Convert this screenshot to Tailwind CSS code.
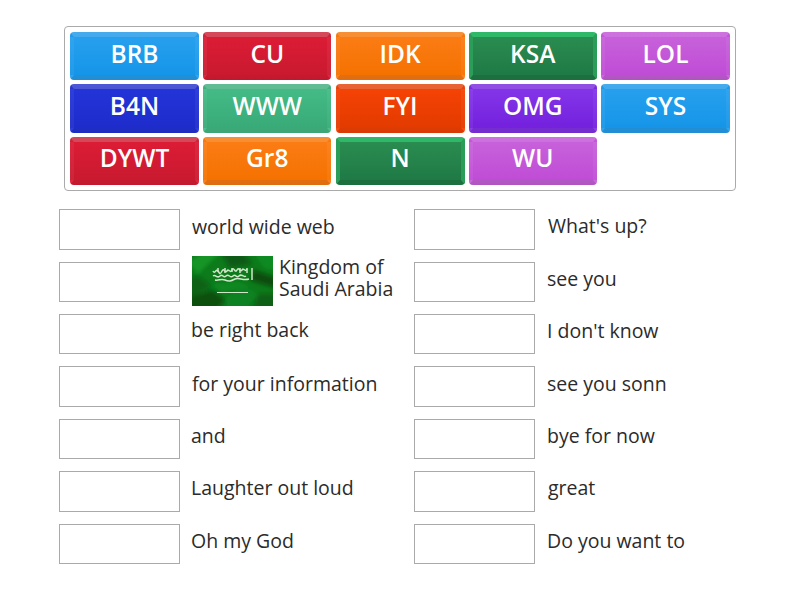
<!DOCTYPE html>
<html><head><meta charset="utf-8"><script src="https://cdn.jsdelivr.net/npm/@tailwindcss/browser@4"></script></head>
<body class="bg-white w-[800px] h-[600px] overflow-hidden font-['Open_Sans',sans-serif] text-[#2b2b2b]">
<div class="pt-[26px] pl-[64px]">
<div class="w-[672px] h-[165px] border border-[#aaaaaa] rounded-[4px] pt-[5px] pl-[5px]">
<div class="grid grid-cols-[129px_128px_129px_128px_129px] gap-x-[4.25px] grid-rows-[48px_49px_48px] gap-y-[4px] w-[660px] text-white font-semibold text-[24.5px] leading-[33px] text-center">
<div class="rounded-[4px] border-t-[5px] border-b-[5px] border-x-[4px] border-t-white/20 border-x-white/5 border-b-black/10 bg-gradient-to-b from-[#26a0ee] to-[#1595e8]">BRB</div>
<div class="rounded-[4px] border-t-[5px] border-b-[5px] border-x-[4px] border-t-white/20 border-x-white/5 border-b-black/10 bg-gradient-to-b from-[#dc1c35] to-[#c91a30]">CU</div>
<div class="rounded-[4px] border-t-[5px] border-b-[5px] border-x-[4px] border-t-white/20 border-x-white/5 border-b-black/10 bg-gradient-to-b from-[#fb7c14] to-[#f57200]">IDK</div>
<div class="rounded-[4px] border-t-[5px] border-b-[5px] border-x-[4px] border-t-[#2fb868] border-x-[#2a9e58] border-b-[#1c6f3f] bg-gradient-to-b from-[#2a8c50] to-[#1f7a45]">KSA</div>
<div class="rounded-[4px] border-t-[5px] border-b-[5px] border-x-[4px] border-t-white/20 border-x-white/5 border-b-black/10 bg-gradient-to-b from-[#c761da] to-[#c04cd6]">LOL</div>
<div class="rounded-[4px] border-t-[5px] border-b-[5px] border-x-[4px] border-t-white/20 border-x-white/5 border-b-black/10 bg-gradient-to-b from-[#2334d8] to-[#1e2ccb]">B4N</div>
<div class="rounded-[4px] border-t-[5px] border-b-[5px] border-x-[4px] border-t-white/20 border-x-white/5 border-b-black/10 bg-gradient-to-b from-[#44bb86] to-[#38aa78]">WWW</div>
<div class="rounded-[4px] border-t-[5px] border-b-[5px] border-x-[4px] border-t-white/20 border-x-white/5 border-b-black/10 bg-gradient-to-b from-[#f64205] to-[#e23b00]">FYI</div>
<div class="rounded-[4px] border-t-[5px] border-b-[5px] border-x-[4px] border-t-white/20 border-x-white/5 border-b-black/10 bg-gradient-to-b from-[#8434e8] to-[#7420de]">OMG</div>
<div class="rounded-[4px] border-t-[5px] border-b-[5px] border-x-[4px] border-t-white/20 border-x-white/5 border-b-black/10 bg-gradient-to-b from-[#26a0ee] to-[#1595e8]">SYS</div>
<div class="rounded-[4px] border-t-[5px] border-b-[5px] border-x-[4px] border-t-white/20 border-x-white/5 border-b-black/10 bg-gradient-to-b from-[#dc1c35] to-[#c91a30] leading-[31px]">DYWT</div>
<div class="rounded-[4px] border-t-[5px] border-b-[5px] border-x-[4px] border-t-white/20 border-x-white/5 border-b-black/10 bg-gradient-to-b from-[#fb7c14] to-[#f57200] leading-[31px]">Gr8</div>
<div class="rounded-[4px] border-t-[5px] border-b-[5px] border-x-[4px] border-t-[#2fb868] border-x-[#2a9e58] border-b-[#1c6f3f] bg-gradient-to-b from-[#2a8c50] to-[#1f7a45] leading-[31px]">N</div>
<div class="rounded-[4px] border-t-[5px] border-b-[5px] border-x-[4px] border-t-white/20 border-x-white/5 border-b-black/10 bg-gradient-to-b from-[#c761da] to-[#c04cd6] leading-[31px]">WU</div>
</div></div>
<div class="grid grid-cols-[355px_300px] -ml-[5px] mt-[18px] grid-rows-[41px_40px_40px_41px_40px_41px_40px] gap-y-[12px] text-[19.5px] leading-[27px]">
<div class="flex items-center"><div class="w-[121px] h-full border border-[#aaaaaa] shrink-0"></div><span class="ml-[12px] mb-[6px]">world wide web</span></div>
<div class="flex items-center"><div class="w-[121px] h-full border border-[#aaaaaa] shrink-0"></div><span class="ml-[13px] mb-[8px]">What's up?</span></div>
<div class="flex items-center"><div class="w-[121px] h-full border border-[#aaaaaa] shrink-0"></div>
<svg class="ml-[12px] shrink-0 -mt-[2px]" width="81" height="50" viewBox="0 0 81 50"><defs><filter id="b" x="-20%" y="-20%" width="140%" height="140%"><feGaussianBlur stdDeviation="2"/></filter><filter id="c" x="-20%" y="-20%" width="140%" height="140%"><feGaussianBlur stdDeviation="0.7"/></filter></defs><rect width="81" height="50" fill="#0d7a1b"/><g filter="url(#b)"><path d="M-5 6 14 -5 30 -5 6 18Z" fill="#149426"/><path d="M-5 22 6 20 20 30 -5 44Z" fill="#0a6216"/><path d="M28 -5 50 -5 60 8 38 12Z" fill="#095a14"/><path d="M60 -5 90 -5 90 16 72 12Z" fill="#118a22"/><path d="M62 14 90 24 90 34 58 24Z" fill="#074c10"/><path d="M-5 42 20 34 34 44 22 56-5 56Z" fill="#07500f"/><path d="M34 42 52 30 66 38 50 56 36 56Z" fill="#0e8220"/><path d="M66 38 90 38 90 56 60 56Z" fill="#086014"/><path d="M18 28 46 26 58 30 30 36Z" fill="#108a24"/></g><g filter="url(#c)" fill="none" stroke="#cfe6c8" stroke-width="1.5"><path d="M21 15c2 4 3-3 5 0s2 4 4 0 3 3 5 0 3 3 5-1 3 4 5 0 3 3 5 0 3 3 5-1"/><path d="M21 20c3-2 4 3 7 0s3 3 6 0 4 3 7 0 3 3 6 0 4 2 7 0"/><path d="M23 24c4 1 6-2 10 0s6 1 10-1 8 2 14 0"/><path d="M26 12v4M33 12v5M40 12v4M48 12v5M55 12v5M60 12v12"/><path d="M25 36.5h31" stroke-width="1"/></g></svg>
<span class="ml-[6px] leading-[22px] mb-[8px]">Kingdom of<br>Saudi Arabia</span></div>
<div class="flex items-center"><div class="w-[121px] h-full border border-[#aaaaaa] shrink-0"></div><span class="ml-[12px] mb-[8px]">see you</span></div>
<div class="flex items-center"><div class="w-[121px] h-full border border-[#aaaaaa] shrink-0"></div><span class="ml-[11px] mb-[9px]">be right back</span></div>
<div class="flex items-center"><div class="w-[121px] h-full border border-[#aaaaaa] shrink-0"></div><span class="ml-[12px] mb-[8px]">I don't know</span></div>
<div class="flex items-center"><div class="w-[121px] h-full border border-[#aaaaaa] shrink-0"></div><span class="ml-[12px] mb-[6px]">for your information</span></div>
<div class="flex items-center"><div class="w-[121px] h-full border border-[#aaaaaa] shrink-0"></div><span class="ml-[12px] mb-[6px]">see you sonn</span></div>
<div class="flex items-center"><div class="w-[121px] h-full border border-[#aaaaaa] shrink-0"></div><span class="ml-[11px] mb-[8px]">and</span></div>
<div class="flex items-center"><div class="w-[121px] h-full border border-[#aaaaaa] shrink-0"></div><span class="ml-[12px] mb-[8px]">bye for now</span></div>
<div class="flex items-center"><div class="w-[121px] h-full border border-[#aaaaaa] shrink-0"></div><span class="ml-[11px] mb-[8px]">Laughter out loud</span></div>
<div class="flex items-center"><div class="w-[121px] h-full border border-[#aaaaaa] shrink-0"></div><span class="ml-[13px] mb-[8px]">great</span></div>
<div class="flex items-center"><div class="w-[121px] h-full border border-[#aaaaaa] shrink-0"></div><span class="ml-[11px] mb-[8px]">Oh my God</span></div>
<div class="flex items-center"><div class="w-[121px] h-full border border-[#aaaaaa] shrink-0"></div><span class="ml-[12px] mb-[8px]">Do you want to</span></div>
</div></div>
</body></html>
